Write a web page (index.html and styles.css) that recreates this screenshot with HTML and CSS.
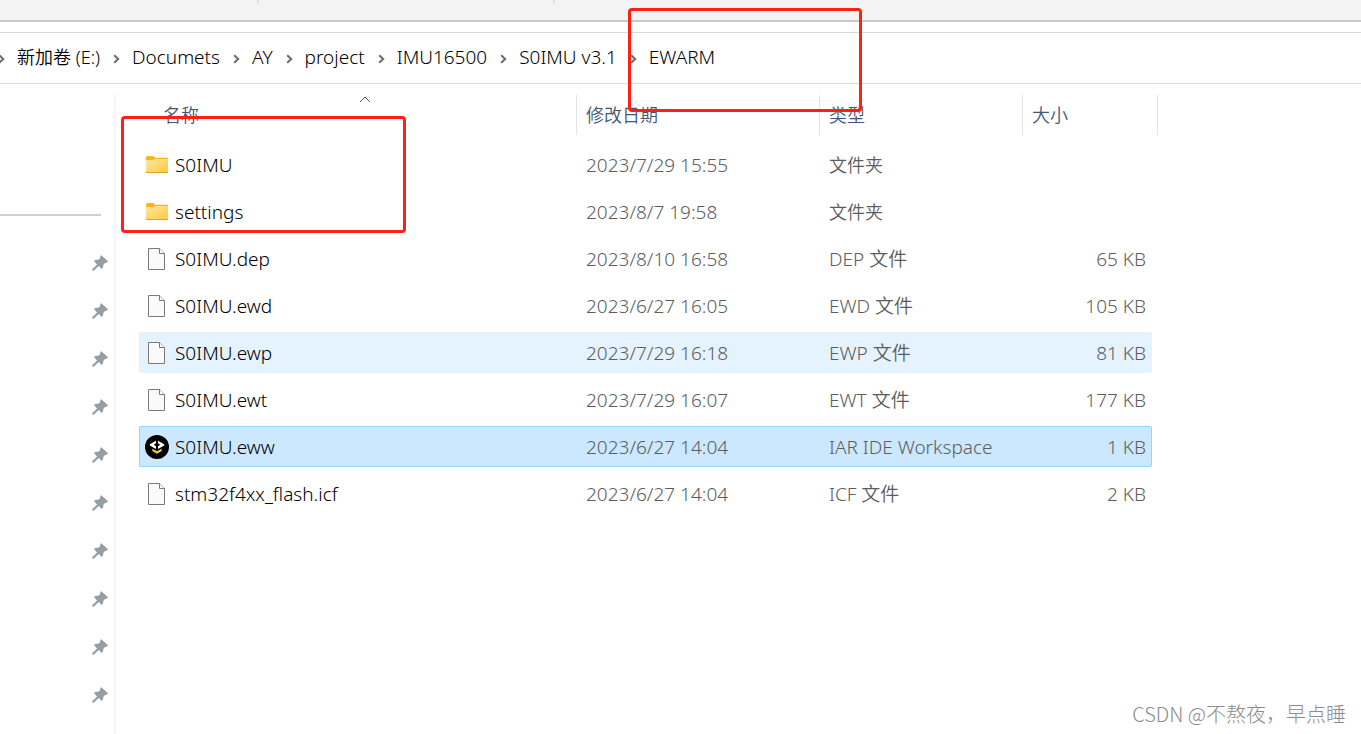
FILE: index.html
```
<!DOCTYPE html>
<html lang="zh-CN">
<head>
<meta charset="utf-8">
<meta name="viewport" content="width=device-width, initial-scale=1">
<title>EWARM</title>
<link rel="stylesheet" href="styles.css">
</head>
<body>
<svg class="symbols" aria-hidden="true">
  <defs>
    <linearGradient id="folder-fill" x1="0" y1="0" x2="1" y2="1">
      <stop offset="0" stop-color="#ffe7a0"/>
      <stop offset="1" stop-color="#ffc93d"/>
    </linearGradient>
  </defs>
  <symbol id="chevron" viewBox="0 0 7 10"><path d="M1.2 1.2 5.2 5 1.2 8.8" fill="none" stroke="#6b6b6b" stroke-width="2"/></symbol>
  <symbol id="pin" viewBox="0 0 16 16"><path d="M9.3 0.2 15.8 6 15.4 7.6 13.4 7.8 11.3 9.8C11.6 11.4 11.1 12.8 9.9 13.9L6.7 10.9 2 15.6.2 15.8.4 14 5 9.4 1.9 6.1C3 4.9 4.6 4.6 6.2 4.9L8.4 2.6 8.3 1Z" fill="#959fa6"/></symbol>
  <symbol id="folder" viewBox="0 0 24 24">
    <path d="M1 4.5Q1 3 2.2 3H8.4L10 4.8H23V9H1Z" fill="#f6b51c"/>
    <path d="M1 7H8.4L10 6H23V19.8H1Z" fill="url(#folder-fill)"/>
    <path d="M1 19.5H23" stroke="#e2a32e"/>
  </symbol>
  <symbol id="file" viewBox="0 0 24 24">
    <path d="M3.5 1.5H14.5L19.5 6.5V22.5H3.5Z" fill="#fafafa" stroke="#7b7977"/>
    <path d="M14.5 1.5V6.5H19.5" fill="#fff" stroke="#7b7977"/>
  </symbol>
  <symbol id="workspace" viewBox="0 0 24 24">
    <circle cx="12" cy="12" r="12" fill="#000"/>
    <path d="M11 5.8V8.3L8.8 9.8 11 11.2V13.9L4.8 10.4V9.2ZM13 5.8V8.3L15.2 9.8 13 11.2V13.9L19.2 10.4V9.2Z" fill="#fff"/>
    <path d="M7.3 13.8 12 16.3 16.7 13.8V16L12 18.8 7.3 16Z" fill="#f5d51b"/>
  </symbol>
</svg>

<header class="ribbon"><span class="ribbon-group"></span><span class="ribbon-group"></span></header>

<nav class="address" aria-label="路径">
  <ol class="crumbs">
    <li class="drive"><svg class="chevron"><use href="#chevron"/></svg><a href="#">新加卷 (E:)</a></li>
    <li><svg class="chevron"><use href="#chevron"/></svg><a href="#">Documets</a></li>
    <li><svg class="chevron"><use href="#chevron"/></svg><a href="#">AY</a></li>
    <li><svg class="chevron"><use href="#chevron"/></svg><a href="#">project</a></li>
    <li><svg class="chevron"><use href="#chevron"/></svg><a href="#">IMU16500</a></li>
    <li><svg class="chevron"><use href="#chevron"/></svg><a href="#">S0IMU v3.1</a></li>
    <li><svg class="chevron"><use href="#chevron"/></svg><a href="#">EWARM</a></li>
  </ol>
</nav>

<div class="explorer">
  <aside class="sidebar">
    <hr class="divider">
    <ul class="pins">
      <li><svg><use href="#pin"/></svg></li>
      <li><svg><use href="#pin"/></svg></li>
      <li><svg><use href="#pin"/></svg></li>
      <li><svg><use href="#pin"/></svg></li>
      <li><svg><use href="#pin"/></svg></li>
      <li><svg><use href="#pin"/></svg></li>
      <li><svg><use href="#pin"/></svg></li>
      <li><svg><use href="#pin"/></svg></li>
      <li><svg><use href="#pin"/></svg></li>
      <li><svg><use href="#pin"/></svg></li>
    </ul>
  </aside>
  <main class="content">
    <table class="files">
      <colgroup><col class="col-name"><col class="col-date"><col class="col-type"><col class="col-size"></colgroup>
      <thead>
        <tr>
          <th scope="col" aria-sort="ascending"><button class="heading heading-name">名称<svg class="sort" viewBox="0 0 12 7"><path d="M1 6 6 1 11 6" fill="none" stroke="#555"/></svg></button></th>
          <th scope="col"><button class="heading">修改日期</button></th>
          <th scope="col"><button class="heading">类型</button></th>
          <th scope="col"><button class="heading heading-size">大小</button></th>
        </tr>
      </thead>
      <tbody>
        <tr><td><a class="file" href="#"><svg><use href="#folder"/></svg>S0IMU</a></td><td>2023/7/29 15:55</td><td class="folder-type">文件夹</td><td></td></tr>
        <tr><td><a class="file" href="#"><svg><use href="#folder"/></svg>settings</a></td><td>2023/8/7 19:58</td><td class="folder-type">文件夹</td><td></td></tr>
        <tr><td><a class="file" href="#"><svg><use href="#file"/></svg>S0IMU.dep</a></td><td>2023/8/10 16:58</td><td>DEP 文件</td><td class="size">65 KB</td></tr>
        <tr><td><a class="file" href="#"><svg><use href="#file"/></svg>S0IMU.ewd</a></td><td>2023/6/27 16:05</td><td>EWD 文件</td><td class="size">105 KB</td></tr>
        <tr class="hovered"><td><a class="file" href="#"><svg><use href="#file"/></svg>S0IMU.ewp</a></td><td>2023/7/29 16:18</td><td>EWP 文件</td><td class="size">81 KB</td></tr>
        <tr><td><a class="file" href="#"><svg><use href="#file"/></svg>S0IMU.ewt</a></td><td>2023/7/29 16:07</td><td>EWT 文件</td><td class="size">177 KB</td></tr>
        <tr class="selected"><td><a class="file" href="#"><svg><use href="#workspace"/></svg>S0IMU.eww</a></td><td>2023/6/27 14:04</td><td>IAR IDE Workspace</td><td class="size">1 KB</td></tr>
        <tr><td><a class="file" href="#"><svg><use href="#file"/></svg>stm32f4xx_flash.icf</a></td><td>2023/6/27 14:04</td><td>ICF 文件</td><td class="size">2 KB</td></tr>
      </tbody>
    </table>
  </main>
</div>

<div class="mark mark-path"></div>
<div class="mark mark-folders"></div>
<p class="watermark">CSDN @不熬夜，早点睡</p>
</body>
</html>
```
FILE: styles.css
```
* { box-sizing: border-box; }

body {
  position: relative;
  display: flex;
  flex-direction: column;
  min-height: 100vh;
  margin: 0;
  background: #fff;
  color: #000;
  font: 350 19px/24px "Noto Sans", "Noto Sans CJK SC", sans-serif;
}

a { color: inherit; text-decoration: none; }
ol, ul { margin: 0; padding: 0; list-style: none; }
svg { display: block; flex: none; }
.symbols { position: absolute; width: 0; height: 0; }

.ribbon {
  display: flex;
  height: 22px;
  background: #f3f3f3;
  border-bottom: 2px solid #c8c8c8;
}
.ribbon-group { width: 296px; height: 4px; border-right: 2px solid #e3e3e3; }
.ribbon-group:first-child { width: 259px; }

.address {
  margin-top: 10px;
  border: solid #d9d9d9;
  border-width: 1px 0;
  overflow: hidden;
}
.crumbs { display: flex; height: 50px; margin-left: -15px; padding-bottom: 2px; align-items: center; }
.crumbs li { display: flex; align-items: center; white-space: nowrap; }
.drive { font-size: 18px; }
.chevron { width: 7px; height: 10px; margin: 4px 12px 0 13px; }

.explorer { display: flex; flex: 1; }
.sidebar {
  width: 116px;
  margin-top: 11px;
  border-right: 2px solid #f5f5f5;
}
.divider { height: 2px; margin: 119px 13px 23px 0; border: 0; background: #d0d0d0; }
.pins li { display: flex; height: 48px; align-items: center; justify-content: flex-end; padding-right: 6px; }
.pins svg { width: 16px; height: 16px; }

.content { flex: 1; padding: 5px 0 0 23px; }
.files { width: 1013px; table-layout: fixed; border-spacing: 0 6px; color: #5c5c5c; }
.col-name { width: 438px; }
.col-date { width: 243px; }
.col-type { width: 203px; }
.col-size { width: 129px; }

th { height: 43px; padding: 0; text-align: left; vertical-align: top; }
.heading {
  position: relative;
  display: block;
  width: 100%;
  height: 40px;
  padding: 0 9px;
  border: 0;
  border-right: 1px solid #e3e3e3;
  background: none;
  color: #3f5674;
  font: inherit;
  font-size: 18px;
  font-weight: 350;
  text-align: left;
}
.heading-name { padding-left: 24px; }
.heading-size { width: 135px; }
.sort { position: absolute; top: 1px; left: 220px; width: 12px; height: 7px; }

td { height: 41px; padding: 0 9px; white-space: nowrap; border: solid transparent; border-width: 1px 0; }
td:first-child { padding-left: 5px; border-left-width: 1px; border-radius: 2px 0 0 2px; }
td:last-child { padding-right: 5px; border-right-width: 1px; border-radius: 0 2px 2px 0; }
.file { display: flex; align-items: center; gap: 6px; color: #000; }
.file svg { width: 24px; height: 24px; }
.folder-type { font-size: 18px; }
.size { text-align: right; }
.hovered td { background: #e5f3ff; border-color: #e5f3ff; }
.selected td { background: #cce8ff; border-color: #99d1ff; }

.mark { position: absolute; border: 3px solid #ff2013; border-radius: 4px; pointer-events: none; }
.mark-path { top: 8px; left: 628px; width: 234px; height: 104px; }
.mark-folders { top: 116px; left: 121px; width: 285px; height: 117px; }

.watermark {
  position: absolute;
  right: 15px;
  bottom: 8px;
  margin: 0;
  color: #8c8c8c;
  font: 300 20px/24px "Noto Sans CJK SC", sans-serif;
}
```
